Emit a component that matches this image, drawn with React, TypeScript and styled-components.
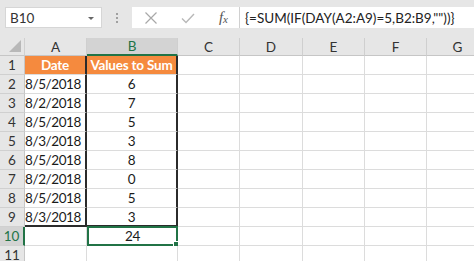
import styled, { createGlobalStyle } from "styled-components";

const GlobalStyle = createGlobalStyle`
    body {
        margin: 0;
        background: #ffffff;
        overflow: hidden;
        font-family: "Lato", "Liberation Sans", sans-serif;
    }
`;

const GREEN = "#217346";
const GRID = "#dcdcdc";
const DARK = "#2b2b2b";

const columns = ["A", "B", "C", "D", "E", "F", "G"];
const colWidths = [62, 91, 62, 63, 62, 62, 62];

const data: [string, string][] = [
    ["8/5/2018", "6"],
    ["8/2/2018", "7"],
    ["8/5/2018", "5"],
    ["8/3/2018", "3"],
    ["8/5/2018", "8"],
    ["8/2/2018", "0"],
    ["8/5/2018", "5"],
    ["8/3/2018", "3"],
];

export default function App() {
    return (
        <>
            <GlobalStyle />
            <Window>
                <Toolbar>
                    <NameBox>
                        B10
                        <DropArrow />
                    </NameBox>
                    <Grip>
                        <span />
                        <span />
                        <span />
                    </Grip>
                    <Buttons>
                        <svg width="14" height="14" viewBox="0 0 14 14">
                            <path d="M1.5 1.5 L12.5 12.5 M12.5 1.5 L1.5 12.5" stroke="#a8a8a8" strokeWidth="1.2" />
                        </svg>
                        <svg width="16" height="14" viewBox="0 0 16 14">
                            <path d="M2 7.5 L6 11.5 L14 3" stroke="#b8b8b8" strokeWidth="1.4" fill="none" />
                        </svg>
                        <Fx>
                            f<sub>x</sub>
                        </Fx>
                    </Buttons>
                    <FormulaBox>{'{=SUM(IF(DAY(A2:A9)=5,B2:B9,""))}'}</FormulaBox>
                </Toolbar>

                <Sheet>
                    <Corner>
                        <CornerTriangle />
                    </Corner>
                    {columns.map((c) => (
                        <ColHeader key={c} $active={c === "B"}>
                            {c}
                        </ColHeader>
                    ))}

                    <RowHeader>1</RowHeader>
                    <Cell $orange $right $align="center">
                        Date
                    </Cell>
                    <Cell $orange $right $align="center">
                        Values to Sum
                    </Cell>
                    {columns.slice(2).map((c) => (
                        <Cell key={c} />
                    ))}

                    {data.map(([date, value], i) => (
                        <RowFragment key={i} n={i + 2} date={date} value={value} last={i === data.length - 1} />
                    ))}

                    <RowHeader $active>10</RowHeader>
                    <Cell />
                    <Cell $selected $align="center">
                        24
                        <FillHandle />
                    </Cell>
                    {columns.slice(2).map((c) => (
                        <Cell key={c} />
                    ))}

                    <RowHeader>11</RowHeader>
                    {columns.map((c) => (
                        <Cell key={c} />
                    ))}
                </Sheet>
            </Window>
        </>
    );
}

function RowFragment({ n, date, value, last }: { n: number; date: string; value: string; last: boolean }) {
    return (
        <>
            <RowHeader>{n}</RowHeader>
            <Cell $right $bottom={last} $align="flex-end">
                {date}
            </Cell>
            <Cell $right $bottom={last} $align="center">
                {value}
            </Cell>
            {columns.slice(2).map((c) => (
                <Cell key={c} />
            ))}
        </>
    );
}

const Window = styled.div`
    width: 474px;
    height: 261px;
    overflow: hidden;
    background: #ffffff;
`;

const Toolbar = styled.div`
    display: flex;
    align-items: stretch;
    height: 38px;
    box-sizing: border-box;
    padding: 7px 0 10px 5px;
    background: #e6e6e6;
`;

const NameBox = styled.div`
    position: relative;
    width: 97px;
    box-sizing: border-box;
    background: #ffffff;
    border: 1px solid #d6d6d6;
    display: flex;
    align-items: center;
    padding-left: 4px;
    font-size: 13.5px;
    color: #333333;
`;

const DropArrow = styled.span`
    position: absolute;
    right: 7px;
    top: 9px;
    width: 0;
    height: 0;
    border-left: 3px solid transparent;
    border-right: 3px solid transparent;
    border-top: 3px solid #666666;
`;

const Grip = styled.div`
    width: 30px;
    display: flex;
    flex-direction: column;
    align-items: center;
    justify-content: center;
    gap: 2px;

    span {
        width: 2px;
        height: 2px;
        background: #a0a0a0;
    }
`;

const Buttons = styled.div`
    width: 108px;
    box-sizing: border-box;
    background: #ffffff;
    border-right: 1px solid #d0d0d0;
    display: flex;
    align-items: center;
    justify-content: space-between;
    padding: 0 11px 0 12px;
`;

const Fx = styled.span`
    font-family: "Liberation Serif", serif;
    font-style: italic;
    font-size: 15px;
    color: #555555;

    sub {
        font-size: 11px;
        vertical-align: -1px;
    }
`;

const FormulaBox = styled.div`
    flex: 1;
    background: #ffffff;
    display: flex;
    align-items: center;
    padding-left: 5px;
    font-size: 13.5px;
    color: #222222;
    white-space: nowrap;
`;

const Sheet = styled.div`
    display: grid;
    grid-template-columns: 25px ${colWidths.map((w) => `${w}px`).join(" ")};
    grid-template-rows: 18px repeat(11, 19px);
    font-size: 13.5px;
    color: #1a1a1a;
`;

const Corner = styled.div`
    position: relative;
    background: #e6e6e6;
    border-right: 1px solid #d0d0d0;
    border-bottom: 1px solid #c6c6c6;
`;

const CornerTriangle = styled.span`
    position: absolute;
    right: 3px;
    bottom: 3px;
    width: 0;
    height: 0;
    border-left: 12px solid transparent;
    border-bottom: 12px solid #b8b8b8;
`;

const ColHeader = styled.div<{ $active?: boolean }>`
    background: ${({ $active }) => ($active ? "#d3d3d3" : "#e6e6e6")};
    color: ${({ $active }) => ($active ? GREEN : "#333333")};
    border-right: 1px solid #cfcfcf;
    border-bottom: ${({ $active }) => ($active ? `2px solid ${GREEN}` : "1px solid #c6c6c6")};
    box-sizing: border-box;
    display: flex;
    align-items: center;
    justify-content: center;
    font-size: 13.5px;
`;

const RowHeader = styled.div<{ $active?: boolean }>`
    background: ${({ $active }) => ($active ? "#d3d3d3" : "#e6e6e6")};
    color: ${({ $active }) => ($active ? GREEN : "#333333")};
    border-right: ${({ $active }) => ($active ? `2px solid ${GREEN}` : "1px solid #c6c6c6")};
    border-bottom: 1px solid #d0d0d0;
    box-sizing: border-box;
    display: flex;
    align-items: center;
    justify-content: center;
    font-size: 13.5px;
`;

const Cell = styled.div<{
    $orange?: boolean;
    $right?: boolean;
    $bottom?: boolean;
    $align?: string;
    $selected?: boolean;
}>`
    position: relative;
    box-sizing: border-box;
    display: flex;
    align-items: center;
    justify-content: ${({ $align }) => $align || "center"};
    padding-right: ${({ $align }) => ($align === "flex-end" ? "4px" : "0")};
    white-space: nowrap;
    background: ${({ $orange }) => ($orange ? "#f58a3e" : "#ffffff")};
    color: ${({ $orange }) => ($orange ? "#ffffff" : "#1a1a1a")};
    font-weight: ${({ $orange }) => ($orange ? 700 : 400)};
    letter-spacing: ${({ $orange }) => ($orange ? "-0.2px" : "-0.4px")};
    border-right: ${({ $right }) => ($right ? `2px solid ${DARK}` : `1px solid ${GRID}`)};
    border-bottom: ${({ $bottom }) => ($bottom ? `2px solid ${DARK}` : `1px solid ${GRID}`)};
    ${({ $selected }) =>
        $selected &&
        `
        border: 2px solid ${GREEN};
        margin-top: -1px;
    `}
`;

const FillHandle = styled.span`
    position: absolute;
    right: -4px;
    bottom: -4px;
    width: 5px;
    height: 5px;
    background: ${GREEN};
    border: 1px solid #ffffff;
`;
